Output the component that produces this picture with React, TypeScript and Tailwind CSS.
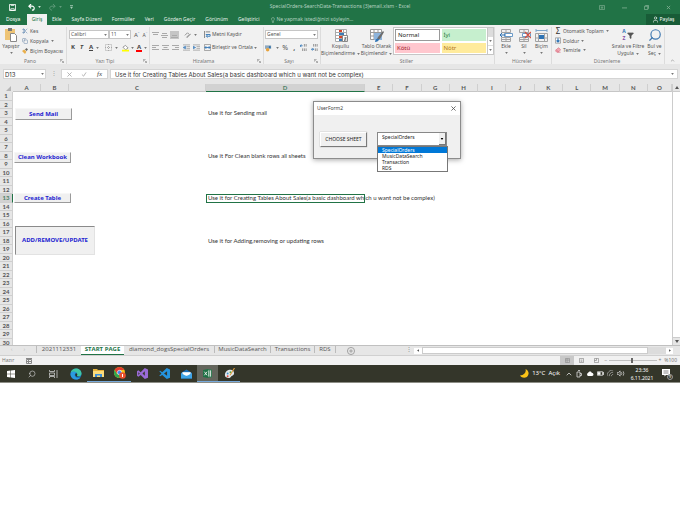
import type { ReactNode } from 'react';
import {
  ChevronUp,
  Copy,
  Eraser,
  Filter,
  Lightbulb,
  Scissors,
  Search,
  User,
} from 'lucide-react';

const ribbonTabs = ['Ekle', 'Sayfa Düzeni', 'Formüller', 'Veri', 'Gözden Geçir', 'Görünüm', 'Geliştirici'];

const columns = ['A', 'B', 'C', 'D', 'E', 'F', 'G', 'H', 'I', 'J', 'K', 'L', 'M', 'N', 'O'];

const rows = Array.from({ length: 30 }, (_, i) => i + 1);

const notes: Record<number, string> = {
  3: 'Use it for Sending mail',
  8: 'Use it For Clean blank rows all sheets',
  13: 'Use it for Creating Tables About Sales(a basic dashboard which u want not be complex)',
  18: 'Use it for Adding,removing or updating rows',
};

const sheetOptions = ['SpecialOrders', 'MusicDataSearch', 'Transaction', 'RDS'];

function Caret() {
  return (
    <svg viewBox="0 0 4 3" className="w-[3px] h-[2px] shrink-0 text-[#777]">
      <path d="M0 0h4L2 3z" fill="currentColor" />
    </svg>
  );
}

function Group({ label, className, launcher, children }: { label: string; className: string; launcher?: boolean; children?: ReactNode }) {
  return (
    <section className={`flex flex-col border-r border-[#dcdcdc] mt-[2px] ${className}`}>
      <div className="flex-1 flex min-h-0">{children}</div>
      <div className="h-[6px] flex items-center text-[#777] leading-[6px] pr-[2px]">
        <span className="flex-1 text-center">{label}</span>
        {launcher && (
          <svg viewBox="0 0 6 6" className="w-[4px] h-[4px]" fill="none" stroke="#888">
            <path d="M.5 4V.5H4M2 2l3 3M5.5 3v2.5H3" />
          </svg>
        )}
      </div>
    </section>
  );
}

function BigButton({ icon, lines, className }: { icon: ReactNode; lines: string[]; className: string }) {
  return (
    <button className={`flex flex-col items-center ${className}`}>
      <span className="h-[16px] flex items-center justify-center">{icon}</span>
      {lines.map((line, i) => (
        <span key={line} className="h-[7px] leading-[7px] whitespace-nowrap flex items-center gap-[2px]">
          {line}
          {lines.length > 1 && i === lines.length - 1 && <Caret />}
        </span>
      ))}
      {lines.length === 1 && <span className="h-[6px] flex items-center"><Caret /></span>}
    </button>
  );
}

function AlignIcon({ variant }: { variant: 'top' | 'middle' | 'bottom' | 'left' | 'center' | 'right' }) {
  const paths = {
    top: 'M0 1.5h7M1 3.5h5',
    middle: 'M1 2.5h5M0 4.5h7M1 6.5h5',
    bottom: 'M1 4.5h5M0 6.5h7',
    left: 'M0 1.5h7M0 3.5h4M0 5.5h7',
    center: 'M0 1.5h7M1.5 3.5h4M0 5.5h7',
    right: 'M0 1.5h7M3 3.5h4M0 5.5h7',
  };
  return (
    <svg viewBox="0 0 7 8" className="w-[7px] h-[8px]" fill="none" stroke="#aaa">
      <path d={paths[variant]} />
    </svg>
  );
}

function IndentIcon({ flip }: { flip?: boolean }) {
  return (
    <svg viewBox="0 0 8 8" className="w-[7px] h-[7px]" fill="none">
      <path d="M0 1h8M0 7h8M4 3h4M4 5h4" stroke="#a5a5a5" />
      <path d={flip ? 'M0 2.5v3L3 4z' : 'M3 2.5v3L0 4z'} fill="#5a90c4" stroke="#5a90c4" />
    </svg>
  );
}

function CellsIcon({ kind }: { kind: 'insert' | 'delete' | 'format' }) {
  return (
    <svg viewBox="0 0 13 13" className="w-[13px] h-[13px]" fill="none">
      {kind === 'format' ? (
        <>
          <path d="M1 0v3M12 0v3M1 1.5h11" stroke="#7ea6cb" />
          <path d="M.5 4.5h12v8H.5zM3.5 4v9M9.5 4v9M1 9h11" stroke="#a3a3a3" />
          <path d="M4 6h5v4H4z" fill="#2f74b5" />
        </>
      ) : (
        <>
          <path d="M1.5.5h9v3h-9zM1.5 8.5h9v4h-9zM6 0v3.5M6 8v5M1 10.5h10" stroke="#a3a3a3" />
          <path d="M4.5 4.5h8v3h-8z" fill="#fff" stroke="#6c9bc8" />
          {kind === 'insert' ? (
            <path d="M6 6H0M2 4L0 6l2 2" stroke="#2f74b5" />
          ) : (
            <path d="M7 3l6 6M13 3L7 9" stroke="#d6503f" strokeWidth="1.2" />
          )}
        </>
      )}
    </svg>
  );
}

function TitleBar() {
  return (
    <header className="bg-[#217346] text-white text-[5px]">
      <div className="h-[14px] flex items-center px-[9px]">
        <div className="w-[72px] flex items-center gap-[8px]">
          <button aria-label="Kaydet">
            <svg viewBox="0 0 8 8" className="w-[7px] h-[7px]" fill="none" stroke="#fff">
              <path d="M.5.5h7v7h-7z" />
              <path d="M2 1.5h4M2 5.5h4v2H2z" />
            </svg>
          </button>
          <button aria-label="Geri Al" className="flex items-center gap-[3px] pl-[4px]">
            <svg viewBox="0 0 8 8" className="w-[7px] h-[7px]" fill="none" stroke="#fff" strokeWidth="1.3">
              <path d="M3.5 0L1 2.5 3.5 5M1 2.5h3.5C8 2.5 8 7 4.5 7" />
            </svg>
            <svg viewBox="0 0 4 3" className="w-[3px] h-[2px]"><path d="M0 0h4L2 3z" fill="#cfe3d7" /></svg>
          </button>
          <button aria-label="Yinele" className="flex items-center gap-[3px] opacity-30">
            <svg viewBox="0 0 8 8" className="w-[7px] h-[7px]" fill="none" stroke="#fff">
              <path d="M4.5 0L7 2.5 4.5 5M7 2.5H3.5C0 2.5 0 7 3.5 7" />
            </svg>
            <svg viewBox="0 0 4 3" className="w-[3px] h-[2px]"><path d="M0 0h4L2 3z" fill="#fff" /></svg>
          </button>
          <svg viewBox="0 0 4 5" className="w-[3px] h-[4px]"><path d="M0 0h4v1H0zM0 2h4L2 5z" fill="#a9ccb8" /></svg>
        </div>
        <h1 className="flex-1 text-center text-[#b4d2c0]">SpecialOrders-SearchData-Transactions (3)email.xlsm - Excel</h1>
        <div className="w-[72px] flex items-center justify-between text-[#7fae92]">
          <svg viewBox="0 0 8 6" className="w-[6px] h-[5px]" fill="none" stroke="currentColor"><path d="M.5.5h7v5h-7zM4 2v3M2.5 3.5L4 2l1.5 1.5" /></svg>
          <svg viewBox="0 0 6 6" className="w-[5px] h-[5px]" fill="none" stroke="currentColor"><path d="M0 3.5h6" /></svg>
          <svg viewBox="0 0 6 6" className="w-[5px] h-[5px]" fill="none" stroke="currentColor"><path d="M.5 1.5h4v4h-4zM1.5.5h4v4" /></svg>
          <svg viewBox="0 0 6 6" className="w-[5px] h-[5px]" fill="none" stroke="currentColor"><path d="M1 1l4 4M5 1L1 5" /></svg>
        </div>
      </div>
      <nav className="h-[11px] flex items-center pl-[6px] leading-[11px] whitespace-nowrap">
        <button className="w-[21px] text-left">Dosya</button>
        <button className="w-[20px] h-full bg-[#f1f1f1] text-[#217346]">Giriş</button>
        <div className="flex gap-[10px] pl-[5px] text-[#e6f1ea]">
          {ribbonTabs.map((tab) => (
            <button key={tab}>{tab}</button>
          ))}
        </div>
        <label className="flex items-center gap-[1px] pl-[10px] flex-1 text-[#b4d2c0]">
          <Lightbulb className="w-[6px] h-[6px]" />
          <input className="w-full bg-transparent placeholder:text-[#b4d2c0]" placeholder="Ne yapmak istediğinizi söyleyin..." />
        </label>
        <button className="w-[34px] h-full bg-[#185c37] flex items-center justify-center gap-[1px]">
          <User className="w-[7px] h-[7px]" />
          Paylaş
        </button>
      </nav>
    </header>
  );
}

function Ribbon() {
  return (
    <div className="h-[39px] bg-[#f1f1f1] flex text-[5px] text-[#555]">
      <Group label="Pano" className="w-[67px] shrink-0" launcher>
        <BigButton className="w-[22px]" lines={['Yapıştır']} icon={
          <svg viewBox="0 0 12 14" className="w-[12px] h-[14px]">
            <path d="M0 1h10v11H0z" fill="#eec475" />
            <path d="M3 0h4v3H3z" fill="#777" />
            <path d="M5.5 5.5h4l2 2v6h-6z" fill="#fff" stroke="#888" />
          </svg>
        } />
        <div className="flex flex-col h-[28px] justify-between items-start leading-[8px] whitespace-nowrap">
          <button className="flex items-center gap-[2px]"><Scissors className="w-[6px] h-[6px] text-[#4a78a8]" />Kes</button>
          <button className="flex items-center gap-[2px]"><Copy className="w-[6px] h-[6px] text-[#6a87a6]" />Kopyala <Caret /></button>
          <button className="flex items-center gap-[2px]">
            <svg viewBox="0 0 8 8" className="w-[6px] h-[6px]"><path d="M0 4l3-2 3 3-2 3z" fill="#eab04c" /><path d="M4 2l2-2 2 2-2 2z" fill="#666" /></svg>
            Biçim Boyacısı
          </button>
        </div>
      </Group>

      <Group label="Yazı Tipi" className="w-[83px] shrink-0" launcher>
        <div className="flex flex-col pl-[2px] pt-[3px] gap-[4px]">
          <div className="flex items-center">
            <button className="w-[40px] h-[9px] bg-white border border-[#c6c6c6] flex items-center justify-between px-[1px]">Calibri <Caret /></button>
            <button className="w-[22px] h-[9px] bg-white border border-[#c6c6c6] flex items-center justify-between px-[1px]">11 <Caret /></button>
            <button className="pl-[3px] text-[6px] leading-[8px]">A<sup className="text-[4px] text-[#2f74b5]">ˆ</sup></button>
            <button className="pl-[3px] text-[5px] leading-[8px]">A<sup className="text-[4px] text-[#2f74b5]">ˇ</sup></button>
          </div>
          <div className="flex items-center h-[9px] text-[6px] text-[#444] pl-[2px]">
            <button className="w-[9px] font-bold text-left">K</button>
            <button className="w-[9px] font-bold italic text-left">T</button>
            <button className="w-[16px] font-bold flex items-center gap-[3px]"><span className="border-b border-[#444] leading-[6px]">A</span><Caret /></button>
            <button className="w-[17px] flex items-center gap-[3px]" aria-label="Kenarlıklar">
              <svg viewBox="0 0 7 7" className="w-[7px] h-[7px]" fill="none" stroke="#aaa"><path d="M.5.5h6v6h-6zM3.5 0v7M0 3.5h7" strokeDasharray="1 1" /></svg>
              <Caret />
            </button>
            <button className="w-[14px] flex items-center gap-[2px]" aria-label="Dolgu Rengi">
              <svg viewBox="0 0 8 8" className="w-[7px] h-[8px]"><path d="M1 3l3-2 3 3-3 2z" fill="#fff" stroke="#777" strokeWidth=".8" /><path d="M0 6h8v2H0z" fill="#ff0" /></svg>
              <Caret />
            </button>
            <button className="flex items-center gap-[2px] font-bold"><span className="border-b-2 border-[#f00] leading-[6px] px-[1px]">A</span><Caret /></button>
          </div>
        </div>
      </Group>

      <Group label="Hizalama" className="w-[114px] shrink-0" launcher>
        <div className="flex flex-col pl-[2px] pt-[3px] gap-[4px] whitespace-nowrap">
          <div className="flex items-center h-[9px]">
            <div className="flex items-center gap-[2px] w-[32px]">
              <AlignIcon variant="top" />
              <AlignIcon variant="middle" />
              <span className="bg-[#c5c5c5] px-px"><AlignIcon variant="bottom" /></span>
            </div>
            <button className="w-[20px] flex items-center gap-[3px]" aria-label="Yönlendirme">
              <svg viewBox="0 0 8 8" className="w-[7px] h-[7px]" fill="none" stroke="#888"><path d="M1 5l3-3 2 2-3 3M3 8l5-5" /></svg>
              <Caret />
            </button>
            <button className="flex items-center gap-[1px]">
              <svg viewBox="0 0 8 8" className="w-[7px] h-[7px]" fill="none"><path d="M.5 0v8M2 1h5" stroke="#777" /><path d="M2 4h5v2H3M4 4.5L2.5 6 4 7.5" stroke="#2f74b5" /></svg>
              Metni Kaydır
            </button>
          </div>
          <div className="flex items-center h-[9px]">
            <div className="flex items-center gap-[3px] w-[31px]">
              <AlignIcon variant="left" />
              <AlignIcon variant="center" />
              <AlignIcon variant="right" />
            </div>
            <div className="flex items-center gap-[3px] w-[21px]">
              <IndentIcon />
              <IndentIcon flip />
            </div>
            <button className="flex items-center gap-[1px]">
              <svg viewBox="0 0 8 8" className="w-[7px] h-[7px]" fill="none"><path d="M.5.5h7v7h-7z" stroke="#999" /><path d="M1 4h6M2.5 2.5L1 4l1.5 1.5M5.5 2.5L7 4 5.5 5.5" stroke="#2f74b5" /></svg>
              Birleştir ve Ortala <Caret />
            </button>
          </div>
        </div>
      </Group>

      <Group label="Sayı" className="w-[57px] shrink-0" launcher>
        <div className="flex-1 flex flex-col pt-[3px] pl-px pr-[2px] gap-[4px]">
          <button className="h-[9px] bg-white border border-[#c6c6c6] flex items-center justify-between px-[1px]">Genel <Caret /></button>
          <div className="h-[9px] flex items-center justify-between text-[7px] leading-[8px]">
            <svg viewBox="0 0 8 8" className="w-[7px] h-[8px]"><path d="M0 1h7v4H0z" fill="#8fa8bd" /><circle cx="3" cy="6" r="2" fill="#e7a33e" /><circle cx="5.5" cy="3" r="1.2" fill="#3272ac" /></svg>
            <Caret />
            <button>%</button>
            <button className="font-bold w-[5px]">,</button>
            <svg viewBox="0 0 8 8" className="w-[7px] h-[7px]" fill="none"><path d="M3 2H0M1.5.5L0 2l1.5 1.5" stroke="#2f74b5" /><path d="M5 0v3M7 0v3M3 5v3M5 5v3M7 5v3" stroke="#888" /></svg>
            <svg viewBox="0 0 8 8" className="w-[7px] h-[7px]" fill="none"><path d="M0 6h3M1.5 4.5L3 6 1.5 7.5" stroke="#2f74b5" /><path d="M3 0v3M5 0v3M7 0v3M5 5v3M7 5v3" stroke="#888" /></svg>
          </div>
        </div>
      </Group>

      <Group label="Stiller" className="flex-1 min-w-0">
        <BigButton className="w-[39px]" lines={['Koşullu', 'Biçimlendirme']} icon={
          <svg viewBox="0 0 14 13" className="w-[14px] h-[13px]" fill="none">
            <path d="M1.5.5h11v12h-11zM5.5 0v13M9.5 0v13M1 3.5h12M1 6.5h12M1 9.5h12" stroke="#aaa" fill="#fff" />
            <path d="M5 1h3v2H5zM5 7h5v2H5z" fill="#d4452c" />
            <path d="M5 4h5v2H5zM5 10h3v2H5z" fill="#3c7ab5" />
            <path d="M8.5 6.5h5v6h-5z" fill="#fff" stroke="#888" />
            <path d="M10 9h2.5M10 11h2.5M12 8l-1.5 4" stroke="#555" strokeWidth=".7" />
          </svg>
        } />
        <BigButton className="w-[33px]" lines={['Tablo Olarak', 'Biçimlendir']} icon={
          <svg viewBox="0 0 14 13" className="w-[14px] h-[13px]">
            <path d="M.5.5h11v10H.5zM4 0v11M8 0v11M0 3.5h12M0 7h12" stroke="#999" fill="#fff" />
            <path d="M4 4h8v7H4z" fill="#8db4dc" />
            <path d="M6 12l2-4 5-6 1 1-4 7z" fill="#6d6d6d" />
            <path d="M5 13c0-3 2-4 4-3 0 2-2 3-4 3z" fill="#2f74b5" />
          </svg>
        } />
        <div className="flex-1 flex h-[28px] border border-[#c6c6c6] bg-white text-[6px] leading-[9px]">
          <div className="flex-1 grid grid-cols-2 gap-[2px] p-px">
            <button className="border border-[#999] text-left px-[2px] text-[#222]">Normal</button>
            <button className="bg-[#c6efce] text-[#2b7a3c] text-left px-[2px]">İyi</button>
            <button className="bg-[#ffc7ce] text-[#a3182a] text-left px-[2px]">Kötü</button>
            <button className="bg-[#ffeb9c] text-[#b0771b] text-left px-[2px]">Nötr</button>
          </div>
          <div className="w-[6px] border-l border-[#c6c6c6] flex flex-col divide-y divide-[#ddd]">
            <span className="flex-1 flex items-center justify-center bg-[#dcdcdc]" />
            <span className="flex-1 flex items-center justify-center"><Caret /></span>
            <span className="flex-1 flex items-center justify-center"><Caret /></span>
          </div>
        </div>
      </Group>

      <Group label="Hücreler" className="w-[57px] shrink-0">
        <div className="flex-1 flex pl-[2px]">
          <BigButton className="w-[18px]" lines={['Ekle']} icon={<CellsIcon kind="insert" />} />
          <BigButton className="w-[18px]" lines={['Sil']} icon={<CellsIcon kind="delete" />} />
          <BigButton className="w-[17px]" lines={['Biçim']} icon={<CellsIcon kind="format" />} />
        </div>
      </Group>

      <Group label="Düzenleme" className="w-[113px] shrink-0">
        <div className="w-[59px] flex flex-col h-[27px] justify-between items-start pl-[3px] leading-[8px] whitespace-nowrap">
          <button className="flex items-center gap-[2px]"><span className="text-[8px] w-[6px] leading-[8px] text-[#333]">Σ</span>Otomatik Toplam <Caret /></button>
          <button className="flex items-center gap-[2px]">
            <svg viewBox="0 0 8 8" className="w-[6px] h-[7px]" fill="none"><path d="M.5.5h7v7h-7z" stroke="#888" fill="#fff" /><path d="M4 1v5M2 4l2 2 2-2" stroke="#2f74b5" strokeWidth="1.5" /></svg>
            Doldur <Caret />
          </button>
          <button className="flex items-center gap-[2px]"><Eraser className="w-[6px] h-[6px] text-[#d5566a]" fill="#f0a6b2" />Temizle <Caret /></button>
        </div>
        <BigButton className="w-[34px]" lines={['Sırala ve Filtre', 'Uygula']} icon={
          <span className="flex items-center gap-px">
            <span className="flex flex-col text-[5px] leading-[7px] font-bold text-[#2f74b5]"><span>A</span><span className="text-[#8750a5]">Z</span></span>
            <Filter className="w-[7px] h-[7px]" fill="#555" />
          </span>
        } />
        <BigButton className="w-[19px]" lines={['Bul ve', 'Seç']} icon={<Search className="w-[14px] h-[14px] text-[#3f78b0] -scale-x-100" />} />
      </Group>
      <div className="w-[15px] shrink-0 flex items-end justify-center pb-[1px]"><ChevronUp className="w-[5px] h-[5px]" /></div>
    </div>
  );
}

function FormulaBar() {
  return (
    <div className="h-[20px] bg-[#e6e6e6] py-[5px] pl-[3px] pr-[2px] flex text-[6px] leading-[9px] text-[#333]">
      <label className="w-[43px] bg-white border border-[#d4d4d4] flex items-center px-[1px]">
        <input aria-label="Ad Kutusu" className="w-full min-w-0 font-['Inter',sans-serif]" defaultValue="D13" />
        <Caret />
      </label>
      <span className="w-[15px] text-center text-[#999]">⋮</span>
      <div className="w-[47px] bg-white border border-[#d4d4d4] flex items-center justify-around text-[#aaa]">
        <svg viewBox="0 0 6 6" className="w-[5px] h-[5px]" fill="none" stroke="currentColor"><path d="M.5.5l5 5M5.5.5l-5 5" /></svg>
        <svg viewBox="0 0 6 6" className="w-[6px] h-[5px]" fill="none" stroke="currentColor"><path d="M.5 3l2 2 3-4.5" /></svg>
        <span className="italic font-['Liberation_Serif',serif] text-[7px] text-[#444]">fx</span>
      </div>
      <label className="flex-1 ml-[2px] bg-white border border-[#d4d4d4] flex items-center pl-[4px] pr-[3px]">
        <input
          aria-label="Formül"
          className="w-full font-['Inter',sans-serif]"
          defaultValue="Use it for Creating Tables About Sales(a basic dashboard which u want not be complex)"
        />
        <Caret />
      </label>
    </div>
  );
}

function Grid() {
  return (
    <table className="flex-1 table-fixed border-separate border-spacing-0 h-[263px] w-full font-['Lato','Noto_Sans',sans-serif] text-[6px] leading-[8px] text-[#333]">
      <colgroup>
        <col className="w-[13px]" />
        <col className="w-[28px]" />
        <col className="w-[28px]" />
        <col className="w-[137px]" />
        <col className="w-[159px]" />
        {columns.slice(4, -1).map((c) => (
          <col key={c} />
        ))}
        <col className="w-[24px]" />
      </colgroup>
      <thead>
        <tr className="bg-[#e6e6e6]">
          <th className="p-0 h-[8px]">
            <svg viewBox="0 0 6 6" className="w-[5px] h-[5px] ml-auto mr-[2px]"><path d="M6 0v6H0z" fill="#b5b5b5" /></svg>
          </th>
          {columns.map((c) => (
            <th
              key={c}
              scope="col"
              className={`p-0 h-[8px] leading-[7px] font-bold border-r border-[#cfcfcf] border-b ${c === 'D' ? 'bg-[#d2d2d2] text-[#4b8064] border-b-[#217346]' : 'text-[#555] border-b-[#c6c6c6]'}`}
            >
              {c}
            </th>
          ))}
        </tr>
      </thead>
      <tbody>
        {rows.map((n) => (
          <tr key={n}>
            <th
              scope="row"
              className={`p-0 leading-[7px] font-bold border-b border-[#cfcfcf] border-r ${n === 13 ? 'bg-[#d2d2d2] text-[#4b8064] border-r-[#217346]' : 'text-[#555] bg-[#e6e6e6]'}`}
            >
              {n}
            </th>
            <td className="p-0" colSpan={3} />
            <td className={`p-0 whitespace-nowrap overflow-visible ${n === 13 ? 'outline outline-[#217346] -outline-offset-1' : ''}`}>
              <span className="block pl-[2px] leading-[8px]">{notes[n]}</span>
            </td>
            <td className="p-0" colSpan={11} />
          </tr>
        ))}
      </tbody>
    </table>
  );
}

const macroButton = "absolute bg-[#f0f0f0] border font-['Noto_Sans',sans-serif] text-[#2424d0] font-bold text-[6px] whitespace-nowrap flex items-center justify-center";
const raised = 'border-t-[#f7f7f7] border-l-[#f7f7f7] border-r-[#9a9a9a] border-b-[#9a9a9a]';

function UserForm() {
  return (
    <div role="dialog" aria-label="UserForm2" className="absolute left-[313px] top-[17px] w-[148px] h-[58px] bg-[#f0f0f0] border border-[#8c8c8c] shadow-[0_1px_5px_rgba(0,0,0,0.35)] text-[5px] text-[#222]">
      <div className="h-[13px] bg-white flex items-center justify-between px-[3px]">
        <span className="text-[#444]">UserForm2</span>
        <button aria-label="Kapat" className="pr-[1px]">
          <svg viewBox="0 0 6 6" className="w-[5px] h-[5px]" fill="none" stroke="#555"><path d="M.5.5l5 5M5.5.5l-5 5" /></svg>
        </button>
      </div>
      <div className="flex items-start justify-between pt-[17px] pl-[6px] pr-[12px]">
        <button className="w-[47px] h-[15px] bg-[#f0f0f0] border border-t-white border-l-white border-r-[#7a7a7a] border-b-[#7a7a7a] shadow-[0_0_1px_#999]">CHOOSE SHEET</button>
        <div className="relative w-[71px]">
          <select aria-label="Sheet" className="appearance-none w-[70px] h-[14px] block bg-white border border-[#888] pl-[4px] pb-[4px] leading-[7px]" defaultValue="SpecialOrders">
            {sheetOptions.map((o) => (
              <option key={o}>{o}</option>
            ))}
          </select>
          <span className="absolute right-[2px] top-[1px] w-[7px] h-[12px] bg-[#f0f0f0] border-r border-b border-[#777] flex items-center justify-center pointer-events-none">
            <svg viewBox="0 0 4 3" className="w-[4px] h-[2px]"><path d="M0 0h4L2 3z" fill="#000" /></svg>
          </span>
          <ul role="listbox" className="absolute left-0 top-[14px] w-full bg-white border border-[#777] leading-[6px]">
            {sheetOptions.map((o, i) => (
              <li key={o} role="option" aria-selected={i === 0} className={`pl-[4px] ${i === 0 ? 'bg-[#0078d7] text-white' : ''}`}>{o}</li>
            ))}
          </ul>
        </div>
      </div>
    </div>
  );
}

function SheetTabs() {
  return (
    <div className="h-[10px] bg-[#e6e6e6] border-t border-[#c0c0c0] flex items-start text-[6px] leading-[7px] text-[#555] whitespace-nowrap font-['Open_Sans',sans-serif]">
      <div className="w-[36px] flex items-center justify-evenly text-[#bbb]">
        <span>‹</span>
        <span>›</span>
      </div>
      <button className="w-[45px] border-l border-[#bbb]">2021112331</button>
      <button className="w-[43px] h-[9px] pb-[1px] bg-white font-bold text-[#217346] border-b border-[#217346]">START PAGE</button>
      <button className="w-[91px] border-r border-[#bbb]">diamond_dogsSpecialOrders</button>
      <button className="w-[56px] border-r border-[#bbb]">MusicDataSearch</button>
      <button className="w-[44px] border-r border-[#bbb]">Transactions</button>
      <button className="w-[21px] border-r border-[#bbb]">RDS</button>
      <button aria-label="Yeni sayfa" className="w-[29px] h-[9px] flex items-center justify-center">
        <svg viewBox="0 0 9 9" className="w-[8px] h-[8px]" fill="none" stroke="#999"><circle cx="4.5" cy="4.5" r="4" /><path d="M4.5 2.5v4M2.5 4.5h4" /></svg>
      </button>
      <div className="flex-1" />
      <span className="w-[8px] text-[#888]">⋮</span>
      <div className="w-[259px] h-[9px] flex items-center">
        <span className="w-[8px] h-[6px] bg-white flex items-center justify-center"><svg viewBox="0 0 3 4" className="w-[2px] h-[3px]"><path d="M3 0v4L0 2z" fill="#555" /></svg></span>
        <span className="w-[226px] h-[7px] bg-white border border-[#ccc]" />
        <span className="flex-1 h-[7px] bg-[#dcdcdc]" />
        <span className="w-[7px] h-[6px] bg-white flex items-center justify-center"><svg viewBox="0 0 3 4" className="w-[2px] h-[3px]"><path d="M0 0v4l3-2z" fill="#555" /></svg></span>
      </div>
      <div className="w-[7px]" />
    </div>
  );
}

function StatusBar() {
  return (
    <div className="h-[10px] bg-[#f1f1f1] border-t border-[#d0d0d0] flex items-center text-[5px] text-[#777] pl-[2px] pr-[3px]">
      <span className="w-[24px]">Hazır</span>
      <svg viewBox="0 0 6 6" className="w-[6px] h-[6px]" fill="none" stroke="#888"><path d="M.5 1.5h5v4h-5zM0 .5h6M2.5 2v3M1 3.5h4" /></svg>
      <div className="flex-1" />
      <button aria-label="Normal" className="w-[14px] h-full bg-[#c8c8c8] flex items-center justify-center"><svg viewBox="0 0 6 6" className="w-[5px] h-[5px]" fill="none" stroke="#999"><path d="M.5.5h5v5h-5zM2.5 0v6M0 2.5h6" /></svg></button>
      <button aria-label="Sayfa Düzeni" className="w-[15px] flex justify-center"><svg viewBox="0 0 6 6" className="w-[5px] h-[5px]" fill="none" stroke="#999"><path d="M.5.5h5v5h-5zM2 2.5h2M2 4h2" /></svg></button>
      <button aria-label="Sayfa Sonu" className="w-[14px] flex justify-center"><svg viewBox="0 0 6 6" className="w-[5px] h-[5px]" fill="none" stroke="#999"><path d="M.5.5h5v5h-5zM3 0v3H0" /></svg></button>
      <span className="w-[6px] text-center">−</span>
      <label className="w-[48px] flex">
        <input
          type="range"
          aria-label="Yakınlaştırma"
          defaultValue={48}
          className="appearance-none w-full h-px bg-[#c0c0c0] [&::-webkit-slider-thumb]:appearance-none [&::-webkit-slider-thumb]:w-[2px] [&::-webkit-slider-thumb]:h-[5px] [&::-webkit-slider-thumb]:bg-[#666]"
        />
      </label>
      <span className="w-[6px] text-center">+</span>
      <span className="w-[14px] text-right">%100</span>
    </div>
  );
}

function Taskbar() {
  return (
    <footer className="h-[18px] bg-[#34362a] border-b border-[#8d8e86] flex items-stretch text-white text-[6px]">
      <button aria-label="Başlat" className="w-[21px] flex items-center justify-center">
        <svg viewBox="0 0 8 8" className="w-[8px] h-[8px]"><path d="M0 1l3.5-.5v3.3H0zM4 .4L8 0v3.8H4zM0 4.3h3.5v3.3L0 7zM4 4.3h4V8l-4-.5z" fill="#fff" /></svg>
      </button>
      <button aria-label="Ara" className="w-[21px] flex items-center justify-center"><Search className="w-[8px] h-[8px] text-[#ccc] -scale-x-100" /></button>
      <button aria-label="Görev Görünümü" className="w-[22px] flex items-center justify-center">
        <svg viewBox="0 0 9 8" className="w-[9px] h-[8px]" fill="none" stroke="#ccc" strokeWidth=".8"><path d="M.5 0v1.5h5V0M.5 3h5v2.5h-5zM.5 8V6.5h5V8M8 0v8" /></svg>
      </button>
      <button aria-label="Edge" className="w-[23px] flex items-center justify-center">
        <svg viewBox="0 0 12 12" className="w-[12px] h-[12px]">
          <circle cx="6" cy="6" r="5.5" fill="#1878c8" />
          <path d="M.7 5C1 2 3.5.5 6 .5c3 0 5.5 2 5.5 5 0 2-1.5 3-3.5 3-1 0-1.7-.5-1.2-1C8 6 6.5 4 4.5 3.8 3 3.7 1.3 4 .7 5z" fill="#3fc6a5" />
          <path d="M.7 5C1.5 3.5 5 3 6.3 5 4.5 5 4 8 6 9.5c1.5 1 3.5.5 4.5 0C8 13 1.5 12 .5 7z" fill="#2b9be0" />
          <path d="M6.2 5.2c1.2.3 1.5 1.5.7 2.5.3.7 1.5.8 2.6.6C8.5 9.3 5.5 9 5.2 7c-.1-.8.3-1.5 1-1.8z" fill="#2a2d24" />
        </svg>
      </button>
      <button aria-label="Dosya Gezgini" className="w-[22px] flex items-center justify-center border-b border-[#76a9dc]">
        <svg viewBox="0 0 11 10" className="w-[11px] h-[10px]"><path d="M0 1h4l1 1h6v7H0z" fill="#e8b43c" /><path d="M0 3h11v6H0z" fill="#fbdc7c" /><path d="M2 6h7v3H7V7.5H4V9H2z" fill="#3f8fd8" /></svg>
      </button>
      <button aria-label="Chrome" className="w-[22px] flex items-center justify-center border-b border-[#76a9dc]">
        <svg viewBox="0 0 12 12" className="w-[12px] h-[12px]">
          <circle cx="5.5" cy="5.5" r="5.5" fill="#fbc116" />
          <path d="M.7 2.8A5.5 5.5 0 0 0 5.5 11l1.5-3-4-1z" fill="#2da94f" />
          <path d="M.7 2.8L3.3 7 5.5 3H10.3A5.5 5.5 0 0 0 .7 2.8z" fill="#e33b2e" />
          <circle cx="5.5" cy="5.5" r="2.2" fill="#4285f4" stroke="#fff" strokeWidth=".6" />
          <circle cx="8.5" cy="8.5" r="3.3" fill="#e8512e" />
          <path d="M8.5 7v3" stroke="#fff" />
        </svg>
      </button>
      <button aria-label="Visual Studio" className="w-[22px] flex items-center justify-center">
        <svg viewBox="0 0 12 12" className="w-[11px] h-[11px]"><path d="M8.5 0L12 1.5v9L8.5 12 4 7.5 1.5 9.5 0 8.5v-5l1.5-1L4 4.5zM8.5 3.5L6 6l2.5 2.5zM1.5 4.5v3L3 6z" fill="#9a6bd6" fillRule="evenodd" /></svg>
      </button>
      <button aria-label="Visual Studio Code" className="w-[22px] flex items-center justify-center">
        <svg viewBox="0 0 12 12" className="w-[11px] h-[11px]"><path d="M8.5 0L12 1.5v9L8.5 12 3.5 7.5 1.3 9 .3 8.5 2.7 6 .3 3.5 1.3 3l2.2 1.5zM8.8 3.5L5.5 6l3.3 2.5z" fill="#2594de" fillRule="evenodd" /></svg>
      </button>
      <button aria-label="Posta" className="w-[22px] flex items-center justify-center">
        <svg viewBox="0 0 12 10" className="w-[11px] h-[10px]"><path d="M0 4l6-4 6 4v6H0z" fill="#1b6fb8" /><path d="M1.5 3h9v4h-9z" fill="#fff" /><path d="M0 4l6 3.5L12 4v6H0z" fill="#3fa4e6" /></svg>
      </button>
      <button aria-label="Excel" className="w-[21px] flex items-center justify-center bg-[#63655c] border-b border-[#76a9dc]">
        <svg viewBox="0 0 10 10" className="w-[9px] h-[9px]"><path d="M5 1h4.5v8H5z" fill="#fff" stroke="#217346" /><path d="M0 1l6-1v10L0 9z" fill="#1e7145" /><path d="M1.5 3l3 4M4.5 3l-3 4" stroke="#fff" strokeWidth=".9" /><path d="M7.5 1v8" stroke="#217346" /></svg>
      </button>
      <button aria-label="Paint" className="w-[22px] flex items-center justify-center border-b border-[#76a9dc]">
        <svg viewBox="0 0 12 12" className="w-[11px] h-[11px]"><path d="M1 8c0-4 3-6 6-6 3 0 4 2 4 4s-2 2-3 3-1 2-3 2-4-1-4-3z" fill="#dfe6ea" /><circle cx="4" cy="6" r="1" fill="#3c8fd0" /><circle cx="7" cy="4.5" r="1" fill="#4caf50" /><circle cx="4" cy="9" r="1" fill="#e2463b" /><path d="M11.5 0L6.5 8" stroke="#e19b3c" strokeWidth="1.2" /></svg>
      </button>
      <div className="flex-1" />
      <div className="flex items-center pr-[8px]">
        <svg viewBox="0 0 9 9" className="w-[9px] h-[9px]"><path d="M5.5 0c1 3-1 6-5.5 6.5C2 9.5 6.5 9.5 8 6.5 9.5 4 8 1 5.5 0z" fill="#fcc418" /></svg>
        <span className="pl-[3px] pr-[5px] whitespace-pre">13°C  Açık</span>
        <ChevronUp className="w-[8px] h-[8px]" />
        <svg viewBox="0 0 6 8" className="w-[6px] h-[8px] ml-[3px]" fill="none" stroke="#ddd" strokeWidth=".8"><path d="M1 2h3v5H1zM2 .5h2M4 3.5h1.5v2H4" /></svg>
        <svg viewBox="0 0 9 6" className="w-[8px] h-[5px] ml-[4px]"><path d="M2 6a2 2 0 0 1 0-3.5C3 0 6 0 6.5 2 9 2 9.5 6 7 6z" fill="#fff" /></svg>
        <svg viewBox="0 0 8 5" className="w-[7px] h-[5px] ml-[3px]"><path d="M.5.5h6v4h-6zM7 1.5h1v2H7z" fill="none" stroke="#fff" strokeWidth=".8" /><path d="M1 1h3v3H1z" fill="#fff" /></svg>
        <svg viewBox="0 0 8 8" className="w-[7px] h-[7px] ml-[3px]" fill="none" stroke="#bbb" strokeWidth=".8"><path d="M0 7C0 3 3 0 7 0M2.5 7c0-2.5 2-4.5 4.5-4.5M5 7c0-1 1-2 2-2" /></svg>
        <svg viewBox="0 0 9 8" className="w-[8px] h-[7px] ml-[3px]" fill="none" stroke="#ddd" strokeWidth=".8"><path d="M0 3h1.5L3.5 1v6L1.5 5H0zM5 2.5q1 1.5 0 3M7 1.5q1.5 2.5 0 5" /></svg>
        <time className="w-[28px] text-center text-[5px] leading-[8px] ml-[3px]">
          <span className="block">23:36</span>
          <span className="block">6.11.2021</span>
        </time>
        <span className="relative ml-[6px] w-[10px] h-[10px]">
          <svg viewBox="0 0 10 10" className="w-[10px] h-[10px]"><path d="M0 0h8v6H4L2.5 7.5V6H0z" fill="#fff" /><path d="M1.5 2h5M1.5 4h5" stroke="#555" strokeWidth=".7" /></svg>
          <span className="absolute right-[-1px] bottom-[-1px] w-[6px] h-[6px] rounded-full bg-[#34362a] border border-[#999] text-[4px] leading-[4px] text-center">9</span>
        </span>
      </div>
    </footer>
  );
}

export default function App() {
  return (
    <main className="bg-white min-h-screen font-['Noto_Sans','Open_Sans',sans-serif]">
      <TitleBar />
      <Ribbon />
      <FormulaBar />
      <div className="relative">
        {/* Rows run under the sheet tabs, the last one is cut */}
        <div className="flex h-[261px] overflow-hidden">
          <Grid />
          <div className="w-[8px] shrink-0 bg-[#e6e6e6] border-l border-[#ccc] flex flex-col items-center justify-between py-[2px]">
            <svg viewBox="0 0 4 3" className="w-[4px] h-[3px]"><path d="M0 3h4L2 0z" fill="#555" /></svg>
            <span className="flex-1 w-full my-[2px] bg-white border-y border-[#ccc]" />
            <svg viewBox="0 0 4 3" className="w-[4px] h-[3px]"><path d="M0 0h4L2 3z" fill="#555" /></svg>
          </div>
        </div>
        <button className={`${macroButton} ${raised} left-[15px] top-[24px] w-[57px] h-[12px]`}>Send Mail</button>
        <button className={`${macroButton} ${raised} left-[14px] top-[68px] w-[57px] h-[11px]`}>Clean Workbook</button>
        <button className={`${macroButton} ${raised} left-[14px] top-[109px] w-[57px] h-[10px]`}>Create Table</button>
        <button className={`${macroButton} border-t-[#8a8a8a] border-l-[#8a8a8a] border-r-[#e2e2e2] border-b-[#e2e2e2] left-[15px] top-[142px] w-[80px] h-[29px]`}>
          ADD/REMOVE/UPDATE
        </button>
        <UserForm />
      </div>
      <SheetTabs />
      <StatusBar />
      <Taskbar />
    </main>
  );
}
